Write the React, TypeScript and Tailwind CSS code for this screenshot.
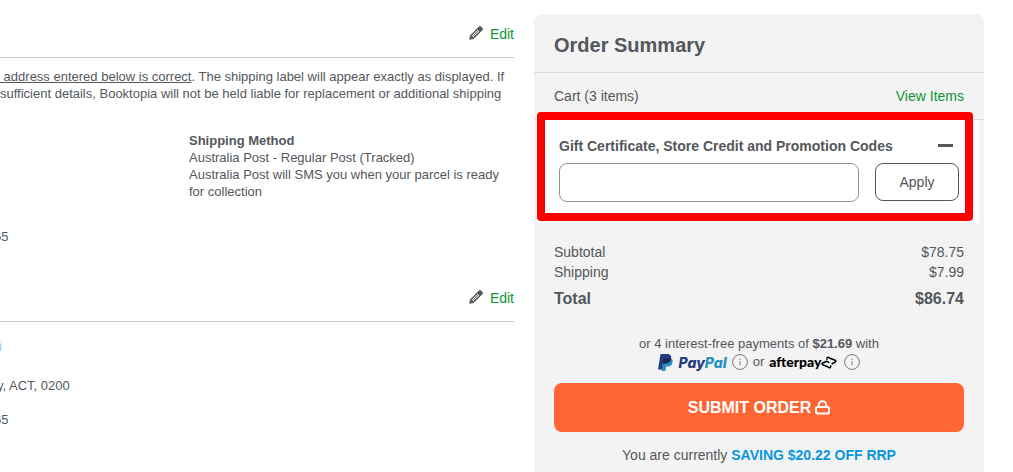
import type { ReactNode } from "react";

function PencilIcon() {
  return (
    <svg viewBox="0 0 14 14" className="h-[14px] w-[14px] text-[#54575b]" aria-hidden="true">
      <path d="M.2 13.8 1 9.400 9.500.9a1.900 1.900 0 0 1 2.900 0l.7.7a1.900 1.900 0 0 1 0 2.900L4.600 13Z" fill="currentColor" />
      <path d="M2.500 10 8.800 3.700 10.300 5.200 4 11.500Z" fill="#fff" />
      <path d="m3 11 6.600-6.600" stroke="currentColor" strokeWidth=".9" />
    </svg>
  );
}

function InfoIcon() {
  return (
    <svg viewBox="0 0 16 16" className="h-4 w-4" fill="none" aria-hidden="true">
      <circle cx="8" cy="8" r="7.400" stroke="#77797c" strokeWidth="1" />
      <path d="M8 7.300v4M8 4.500v1.200" stroke="#8d8f92" strokeWidth="1.300" />
    </svg>
  );
}

function PayPalMark() {
  return (
    <svg viewBox="0 0 15 17" className="h-[17px] w-[15px]" aria-hidden="true">
      <path d="M5 4.500h8c1.600 1 1.900 2.500 1.400 4.200-.6 2.500-2.200 3.700-4.800 3.700H8.200L7.400 17H3.600Z" fill="#2790c3" />
      <path d="M2.500 0h6.200c3.300 0 5 1.600 4.400 4.500-.6 3.200-2.600 4.900-5.900 4.900H4.900L3.900 15.600H0Z" fill="#253b80" />
      <path d="M5.700 4.400h6.800l.6.300c-.6 3-2.600 4.700-5.900 4.700H4.900Z" fill="#1f264f" />
    </svg>
  );
}

function AfterpayMark() {
  return (
    <svg viewBox="0 0 16 13" className="h-[13px] w-4" fill="none" aria-hidden="true">
      <path
        d="M6 3.700V2.300c0-1 .7-1.400 1.600-.9L9 2.200l5.200 2.100c1 .5 1 1.200 0 1.700L10.600 8M9.600 9.300v1.400c0 1-.7 1.400-1.600.9l-1.300-.8-5-2.100c-1-.5-1-1.200 0-1.700L5.600 5.200 8.400 6.600"
        stroke="#000"
        strokeWidth="1.500"
        strokeLinejoin="round"
      />
    </svg>
  );
}

function LockIcon() {
  return (
    <svg viewBox="0 0 15 15" className="h-[15px] w-[15px]" fill="none" stroke="#fff" strokeWidth="1.900" aria-hidden="true">
      <rect x="1" y="7" width="13" height="6.500" rx="1.600" />
      <path d="M3.800 7V4.900a3.700 3.700 0 0 1 7.400 0V7" />
    </svg>
  );
}

function SectionHeader() {
  return (
    <div className="flex h-[44px] items-start justify-end gap-[7px] border-b border-[#c8c8c8] pt-3">
      <PencilIcon />
      <a href="#edit" className="text-[14px] leading-4 text-[#0f9437]">
        Edit
      </a>
    </div>
  );
}

function SummaryRow({ label, children }: { label: string; children: ReactNode }) {
  return (
    <div className="flex justify-between text-[14px] leading-5">
      <span>{label}</span>
      <span>{children}</span>
    </div>
  );
}

export default function App() {
  return (
    <div className="flex min-h-screen gap-5 overflow-hidden bg-white pr-[29px] font-['Liberation_Sans',Arial,sans-serif] text-[#54575b]">
      <main className="min-w-0 flex-1 overflow-hidden pt-[14px] text-[13px] leading-[17px]">
        <SectionHeader />
        <p className="pt-[10px] whitespace-nowrap">
          <span className="underline">&nbsp;address entered below is correct</span>. The shipping label will appear exactly as displayed. If
          <br />
          sufficient details, Booktopia will not be held liable for replacement or additional shipping
        </p>
        <div className="ml-[189px] pt-[30px]">
          <h3 className="font-bold">Shipping Method</h3>
          <p>Australia Post - Regular Post (Tracked)</p>
          <p>Australia Post will SMS you when your parcel is ready for collection</p>
        </div>
        <p className="-ml-[6px] pt-[28px]">65</p>

        <div className="pt-[33px]">
          <SectionHeader />
        </div>
        <p className="-ml-[1px] pt-4 text-[#7fd3f7]">i</p>
        <p className="-ml-[3px] pt-[22px]">y, ACT, 0200</p>
        <p className="-ml-[6px] pt-[17px]">65</p>
      </main>

      <aside className="mt-[14px] w-[450px] rounded-t-[8px] bg-[#f3f3f3]">
        <h2 className="border-b border-[#dadada] px-5 pt-[17px] pb-[13px] text-[20px] leading-7 font-bold">Order Summary</h2>
        <div className="flex justify-between border-b border-[#dadada] px-5 py-[13px] text-[14px] leading-5">
          <span>Cart (3 items)</span>
          <a href="#items" className="text-[#0f9437]">
            View Items
          </a>
        </div>

        <div className="mr-[5px] ml-[3px] flow-root h-[103px] bg-white">
          <form className="-mt-2 mr-[6px] h-[109px] rounded-[4px] border-8 border-[#ff0000] bg-white pt-[17px] pr-[6px] pl-[14px]">
            <div className="flex items-start justify-between">
              <label htmlFor="promo" className="text-[14px] leading-[18px] font-bold">
                Gift Certificate, Store Credit and Promotion Codes
              </label>
              <button type="button" aria-label="Collapse" className="flex h-4 w-[27px] items-center justify-center">
                <span className="h-[3px] w-[15px] bg-[#54575b]" />
              </button>
            </div>
            <div className="mt-2 flex gap-4">
              <input id="promo" type="text" className="h-[39px] min-w-0 flex-1 rounded-[8px] border border-[#919396] bg-white px-3 text-[14px]" />
              <button type="button" className="h-[38px] w-[84px] rounded-[8px] border border-[#54575b] text-[14px]">
                Apply
              </button>
            </div>
          </form>
        </div>

        <div className="px-5 pt-[19px]">
          <SummaryRow label="Subtotal">$78.75</SummaryRow>
          <SummaryRow label="Shipping">$7.99</SummaryRow>
          <div className="flex justify-between pt-[7px] text-[16px] leading-5 font-bold">
            <span>Total</span>
            <span>$86.74</span>
          </div>

          <p className="pt-[26px] text-center text-[13px] leading-[18px]">
            or 4 interest-free payments of <b>$21.69</b> with
          </p>
          <div className="flex h-[18px] items-center justify-center text-[13px]">
            <PayPalMark />
            <span className="pl-[6px] font-['Inter',sans-serif] text-[14px] font-extrabold text-[#253b80] italic">
              Pay<span className="text-[#2790c3]">Pal</span>
            </span>
            <span className="px-[5px]">
              <InfoIcon />
            </span>
            or
            <span className="pl-[5px] font-['Lato',sans-serif] text-[14px] leading-4 font-black text-black">afterpay</span>
            <AfterpayMark />
            <span className="pl-[7px]">
              <InfoIcon />
            </span>
          </div>

          <button type="submit" className="mt-3 flex h-[49px] w-full items-center justify-center gap-1 rounded-[8px] bg-[#ff6633] text-[16px] font-bold text-white">
            SUBMIT ORDER
            <LockIcon />
          </button>
          <p className="pt-[14px] text-center text-[14px] leading-[18px]">
            You are currently <b className="text-[#0a97dd]">SAVING $20.22 OFF RRP</b>
          </p>
        </div>
      </aside>
    </div>
  );
}
